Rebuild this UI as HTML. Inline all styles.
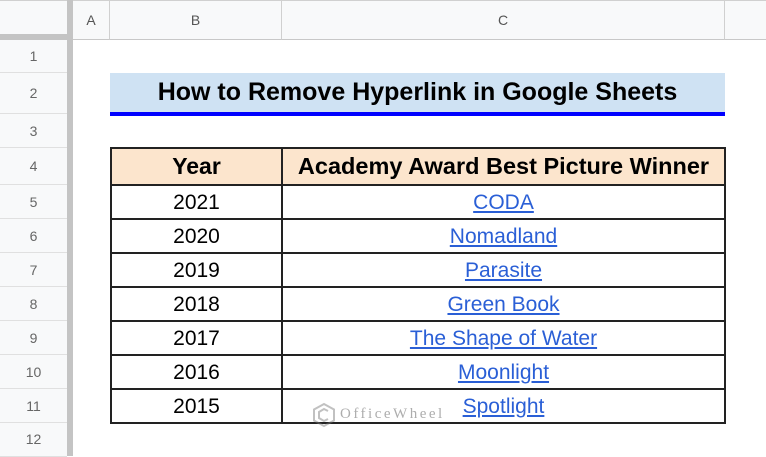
<!DOCTYPE html>
<html><head><style>
body{margin:0;width:766px;height:456px;overflow:hidden;background:#fff;font-family:"Liberation Sans",Arial,sans-serif;position:relative}
.a{position:absolute;box-sizing:border-box}
.rn{left:0;width:67px;background:#f8f9fa;border-bottom:1px solid #e0e0e0;color:#666;font-size:14px;text-align:center}
.ch{top:0;height:40px;background:#f8f9fa;border-right:1px solid #d0d0d0;border-bottom:1px solid #c8c8c8;border-top:1px solid #d0d0d0;color:#555;font-size:14px;text-align:center;line-height:38px}
.c{font-size:21px;text-align:center;color:#000;white-space:nowrap}
.l{color:#2a5fd6;text-decoration:underline}
</style></head><body>
<div class="a ch" style="left:0;width:67px;border-right:none"></div>
<div class="a" style="left:67px;top:0;width:6px;height:456px;background:#c4c4c4"></div>
<div class="a" style="left:0;top:34px;width:73px;height:6px;background:#c4c4c4"></div>
<div class="a ch" style="left:73px;width:37px">A</div>
<div class="a ch" style="left:110px;width:172px">B</div>
<div class="a ch" style="left:282px;width:443px">C</div>
<div class="a ch" style="left:725px;width:50px"></div>

<div class="a rn" style="top:40px;height:33px;line-height:33px">1</div>
<div class="a rn" style="top:73px;height:41px;line-height:41px">2</div>
<div class="a rn" style="top:114px;height:34px;line-height:34px">3</div>
<div class="a rn" style="top:148px;height:37px;line-height:37px">4</div>
<div class="a rn" style="top:185px;height:34px;line-height:34px">5</div>
<div class="a rn" style="top:219px;height:34px;line-height:34px">6</div>
<div class="a rn" style="top:253px;height:34px;line-height:34px">7</div>
<div class="a rn" style="top:287px;height:34px;line-height:34px">8</div>
<div class="a rn" style="top:321px;height:34px;line-height:34px">9</div>
<div class="a rn" style="top:355px;height:34px;line-height:34px">10</div>
<div class="a rn" style="top:389px;height:34px;line-height:34px">11</div>
<div class="a rn" style="top:423px;height:34px;line-height:32px">12</div>

<div class="a" style="left:110px;top:73px;width:615px;height:43px;background:#cfe2f3;border-bottom:4px solid #0000ff;text-align:center;font-weight:bold;font-size:25px;line-height:39px;white-space:nowrap">How to Remove Hyperlink in Google Sheets</div>

<div class="a" style="left:110px;top:147px;width:616px;height:277px;border:2px solid #222"></div>
<div class="a" style="left:112px;top:149px;width:612px;height:36px;background:#fce5cd"></div>
<div class="a" style="left:281px;top:147px;width:2px;height:277px;background:#222"></div>
<div class="a" style="left:110px;top:184px;width:616px;height:2px;background:#222"></div>
<div class="a" style="left:110px;top:218px;width:616px;height:2px;background:#222"></div>
<div class="a" style="left:110px;top:252px;width:616px;height:2px;background:#222"></div>
<div class="a" style="left:110px;top:286px;width:616px;height:2px;background:#222"></div>
<div class="a" style="left:110px;top:320px;width:616px;height:2px;background:#222"></div>
<div class="a" style="left:110px;top:354px;width:616px;height:2px;background:#222"></div>
<div class="a" style="left:110px;top:388px;width:616px;height:2px;background:#222"></div>

<div class="a c" style="left:112px;top:149px;width:169px;line-height:35px;font-weight:bold;font-size:23px">Year</div>
<div class="a c" style="left:283px;top:149px;width:441px;line-height:35px;font-weight:bold;font-size:23.5px">Academy Award Best Picture Winner</div>

<div class="a c" style="left:112px;top:186px;width:169px;line-height:33px">2021</div>
<div class="a c" style="left:283px;top:186px;width:441px;line-height:33px"><span class="l">CODA</span></div>
<div class="a c" style="left:112px;top:220px;width:169px;line-height:33px">2020</div>
<div class="a c" style="left:283px;top:220px;width:441px;line-height:33px"><span class="l">Nomadland</span></div>
<div class="a c" style="left:112px;top:254px;width:169px;line-height:33px">2019</div>
<div class="a c" style="left:283px;top:254px;width:441px;line-height:33px"><span class="l">Parasite</span></div>
<div class="a c" style="left:112px;top:288px;width:169px;line-height:33px">2018</div>
<div class="a c" style="left:283px;top:288px;width:441px;line-height:33px"><span class="l">Green Book</span></div>
<div class="a c" style="left:112px;top:322px;width:169px;line-height:33px">2017</div>
<div class="a c" style="left:283px;top:322px;width:441px;line-height:33px"><span class="l">The Shape of Water</span></div>
<div class="a c" style="left:112px;top:356px;width:169px;line-height:33px">2016</div>
<div class="a c" style="left:283px;top:356px;width:441px;line-height:33px"><span class="l">Moonlight</span></div>
<div class="a c" style="left:112px;top:390px;width:169px;line-height:33px">2015</div>
<div class="a c" style="left:283px;top:390px;width:441px;line-height:33px"><span class="l">Spotlight</span></div>

<svg class="a" style="left:312px;top:402px;opacity:.45" width="24" height="26" viewBox="0 0 24 26"><path d="M12 2 L22 7.5 V18.5 L12 24 L2 18.5 V7.5 Z" fill="none" stroke="#777" stroke-width="2"/><path d="M16 9 L12 7 L7 10 V16 L12 19 L16 17" fill="none" stroke="#777" stroke-width="2"/></svg>
<div class="a" style="left:340px;top:406px;font-family:'Liberation Serif',serif;font-size:15px;letter-spacing:2.5px;color:#999;opacity:.8">OfficeWheel</div>
</body></html>
